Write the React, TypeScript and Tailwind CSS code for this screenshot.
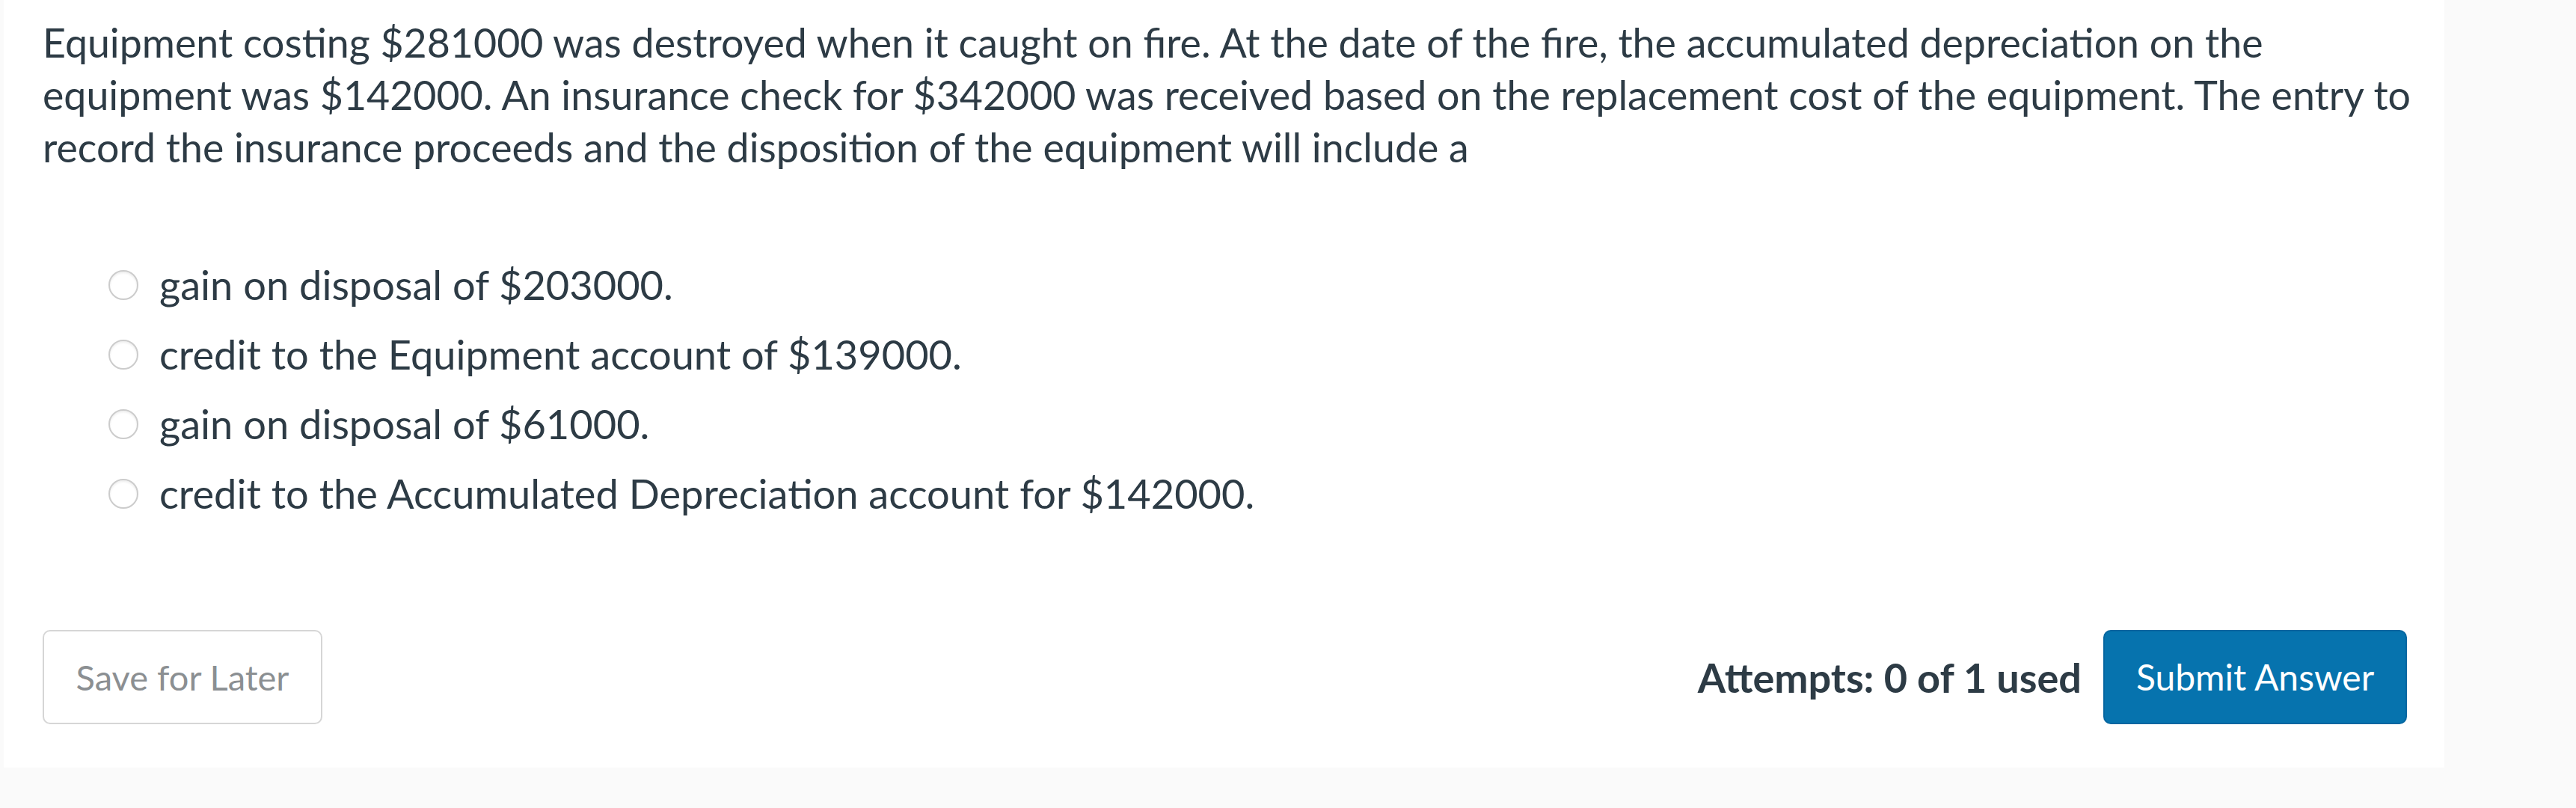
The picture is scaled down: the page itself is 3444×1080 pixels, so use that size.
import React from "react";

const options = [
  "gain on disposal of $203000.",
  "credit to the Equipment account of $139000.",
  "gain on disposal of $61000.",
  "credit to the Accumulated Depreciation account for $142000.",
];

export default function App() {
  return (
    <div
      className="h-[1080px] w-full bg-[#fafafa]"
      style={{ fontFamily: "Lato, 'Open Sans', sans-serif" }}
    >
      <div className="ml-[5px] flex h-[1026px] w-[3263px] flex-col bg-white pl-[52px] pr-[50px] pt-[21px]">
        {/* Treść pytania */}
        <p className="w-[3190px] text-[53.7px] leading-[70px] text-[#2d3b45]">
          Equipment costing $281000 was destroyed when it caught on fire. At the date of the fire, the
          accumulated depreciation on the equipment was $142000. An insurance check for $342000 was
          received based on the replacement cost of the equipment. The entry to record the insurance
          proceeds and the disposition of the equipment will include a
        </p>

        {/* Odpowiedzi */}
        <div className="mt-[103px] flex flex-col pl-[88px]">
          {options.map((o) => (
            <label key={o} className="flex h-[93px] items-center gap-[28px]">
              <span className="h-[40px] w-[40px] shrink-0 rounded-full border-[2px] border-[#cccccc] bg-white shadow-[inset_0_2px_3px_rgba(0,0,0,0.07)]" />
              <span className="text-[54.2px] leading-[70px] text-[#2d3b45]">{o}</span>
            </label>
          ))}
        </div>

        {/* Przyciski */}
        <div className="mt-[136px] flex items-center justify-between">
          <button className="h-[126px] w-[374px] rounded-[10px] border-[2px] border-[#d6d6d6] bg-white text-[47px] text-[#8b8f92]">
            Save for Later
          </button>
          <div className="flex items-center gap-[29px]">
            <span className="text-[54px] font-bold text-[#2d3b45]">Attempts: 0 of 1 used</span>
            <button className="h-[126px] w-[406px] rounded-[10px] border-[2px] border-[#0566a0] bg-[#0673ae] text-[48px] text-white">
              Submit Answer
            </button>
          </div>
        </div>
      </div>
    </div>
  );
}
